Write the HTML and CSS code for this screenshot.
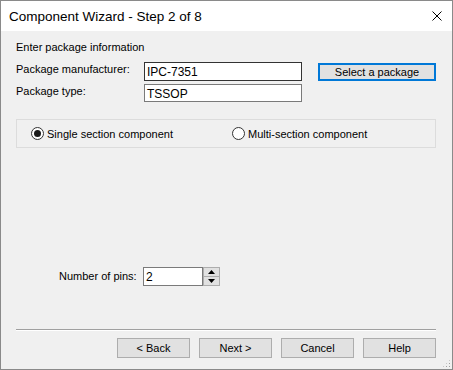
FILE: index.html
```html
<!DOCTYPE html>
<html>
<head>
<meta charset="utf-8">
<link rel="stylesheet" href="styles.css">
</head>
<body>
<div class="window">
  <div class="titlebar">
    <span class="title">Component Wizard - Step 2 of 8</span>
    <svg class="close" width="10" height="10" viewBox="0 0 10 10"><path d="M0.5 0.5L9.5 9.5M9.5 0.5L0.5 9.5" stroke="#000" stroke-width="1"/></svg>
  </div>
  <div class="content">
    <div class="main">
      <div class="heading">Enter package information</div>
      <div class="pkg">
        <label class="lbl">Package manufacturer:</label>
        <div class="input focus">IPC-7351</div>
        <span></span>
        <button class="btn primary">Select a package</button>
        <label class="lbl">Package type:</label>
        <div class="input second">TSSOP</div>
      </div>
      <div class="group">
        <div class="radio-item r1"><span class="radio checked"></span><span>Single section component</span></div>
        <div class="radio-item"><span class="radio"></span><span>Multi-section component</span></div>
      </div>
      <div class="pins">
        <span class="lbl">Number of pins:</span>
        <div class="input pinbox">2</div>
        <div class="spin">
          <div class="spinbtn"><svg width="7" height="4" viewBox="0 0 7 4"><path d="M3.5 0L7 4H0Z" fill="#000"/></svg></div>
          <div class="spinbtn"><svg width="7" height="4" viewBox="0 0 7 4"><path d="M0 0H7L3.5 4Z" fill="#000"/></svg></div>
        </div>
      </div>
    </div>
    <div class="footer">
      <div class="sep"></div>
      <div class="buttons">
        <button class="btn">&lt; Back</button>
        <button class="btn">Next &gt;</button>
        <button class="btn">Cancel</button>
        <button class="btn">Help</button>
      </div>
    </div>
  </div>
  <div class="grip"></div>
</div>
</body>
</html>
```
FILE: styles.css
```css
* { box-sizing: border-box; }
html, body { margin: 0; padding: 0; }
body {
  width: 453px;
  height: 370px;
  overflow: hidden;
  font-family: "Liberation Sans", Arial, sans-serif;
  font-size: 11px;
  color: #000;
}
.window {
  position: relative;
  width: 453px;
  height: 370px;
  border: 1px solid #8a8a8a;
  background: #f0f0f0;
  display: flex;
  flex-direction: column;
}
.titlebar {
  height: 30px;
  background: #fff;
  display: flex;
  align-items: center;
  justify-content: space-between;
  padding: 0 10px 0 8px;
}
.title {
  font-size: 13.5px;
  margin-top: 1px;
}
.content {
  flex: 1;
  display: flex;
  flex-direction: column;
  padding: 0 16px 0 15px;
}
.main { flex: 1; }
.heading {
  margin-top: 9px;
  line-height: 14px;
}
.pkg {
  margin-top: 8px;
  display: grid;
  grid-template-columns: 128px 158px 16px 118px;
  row-gap: 3px;
  align-items: start;
}
.lbl { line-height: 14px; padding-top: 0; }
.input {
  background: #fff;
  border: 1px solid #7a7a7a;
  height: 19px;
  padding: 2px 0 0 2px;
  font-size: 12px;
  line-height: 14px;
}
.input.focus { border-color: #333; }
.input.second { height: 18px; }
.btn {
  font-family: inherit;
  font-size: 11px;
  color: #000;
  background: #e1e1e1;
  border: 1px solid #adadad;
  height: 20px;
  padding: 0;
  margin: 0;
  line-height: 16px;
}
.btn.primary {
  border: 2px solid #0078d7;
  height: 18px;
  margin-top: 1px;
  line-height: 13px;
}
.group {
  margin-top: 17px;
  height: 29px;
  border: 1px solid #dcdcdc;
  display: flex;
  align-items: center;
  padding-left: 14px;
}
.radio-item {
  display: flex;
  align-items: center;
  gap: 3px;
}
.r1 { width: 201px; }
.radio {
  width: 13px;
  height: 13px;
  border: 1px solid #333;
  border-radius: 50%;
  background: #fff;
  position: relative;
}
.radio.checked::after {
  content: "";
  position: absolute;
  left: 2px;
  top: 2px;
  width: 7px;
  height: 7px;
  border-radius: 50%;
  background: #1a1a1a;
}
.pins {
  margin-top: 119px;
  display: flex;
  align-items: flex-start;
  padding-left: 43px;
}
.pins .lbl { width: 84px; padding-top: 2px; }
.pinbox { width: 60px; height: 19px; }
.spin {
  width: 17px;
  height: 19px;
  display: flex;
  flex-direction: column;
  border: 1px solid #adadad;
  border-left: none;
  background: #e1e1e1;
}
.spinbtn {
  flex: 1;
  display: flex;
  align-items: center;
  justify-content: center;
  border: 1px solid #adadad;
  border-width: 0 0 0 1px;
}
.spinbtn:first-child { border-bottom: 1px solid #adadad; }
.footer { padding-bottom: 11px; }
.sep {
  height: 2px;
  border-top: 1px solid #a0a0a0;
  border-bottom: 1px solid #fff;
}
.buttons {
  margin-top: 7px;
  display: flex;
  justify-content: flex-end;
  gap: 9px;
}
.buttons .btn { width: 73px; }
.grip {
  position: absolute;
  right: 1px;
  bottom: 1px;
  width: 9px;
  height: 9px;
  background:
    radial-gradient(circle, #a0a0a0 1px, transparent 1px) 0 0 / 3px 3px;
  clip-path: polygon(100% 0, 100% 100%, 0 100%);
}
```
